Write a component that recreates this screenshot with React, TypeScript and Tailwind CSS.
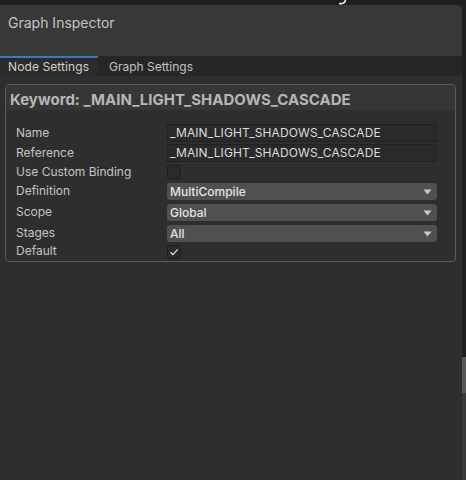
import React from 'react';

const TextField = ({ value }: { value: string }) => (
  <div className="w-[270px] h-[18px] bg-[#2a2a2a] border border-[#212121] rounded-[2px] flex items-center pl-[2px] text-[12px] tracking-[0.1px] text-[#dcdcdc] leading-none">
    {value}
  </div>
);

const Checkbox = ({ checked }: { checked?: boolean }) => (
  <div className="w-[14px] h-[14px] bg-[#2a2a2a] border border-[#1f1f1f] rounded-[2px] flex items-center justify-center">
    {checked && (
      <svg width="10" height="10" viewBox="0 0 10 10">
        <path d="M1.5 5.2 L4 7.6 L8.6 2.4" fill="none" stroke="#e2e2e2" strokeWidth="1.3" />
      </svg>
    )}
  </div>
);

const Dropdown = ({ value }: { value: string }) => (
  <div className="w-[270px] h-[17px] bg-[#505050] rounded-[3px] flex items-center justify-between pl-[3px] pr-[5px] text-[12px] font-medium text-[#e4e4e4] leading-none">
    <span>{value}</span>
    <svg width="9" height="6" viewBox="0 0 9 6">
      <path d="M0.5 0.5 L8.5 0.5 L4.5 5.5 Z" fill="#c9c9c9" />
    </svg>
  </div>
);

const Row = ({ label, h, children }: { label: string; h: string; children: React.ReactNode }) => (
  <div className={`flex items-center ${h}`}>
    <div className="w-[151px] text-[12px] text-[#c4c4c4] leading-none -mt-[1px]">{label}</div>
    {children}
  </div>
);

export default function App() {
  return (
    <div className="w-[466px] h-[480px] bg-[#1e1e1e] flex flex-col font-['Inter','Noto_Sans',sans-serif] overflow-hidden">
      <div className="h-[5px] relative shrink-0">
        <svg className="absolute left-[336px] top-0" width="12" height="5" viewBox="0 0 12 5">
          <path d="M9.5 0 C9 2.6 7 4 3 3.6" fill="none" stroke="#e8e8e8" strokeWidth="1.6" />
        </svg>
      </div>
      <div className="flex flex-1 min-h-0">
        <div className="flex-1 flex flex-col bg-[#2e2e2e] rounded-tr-[5px] overflow-hidden">
          <div className="h-[51px] shrink-0 bg-[#383838] pl-2 pt-[8px] text-[14px] text-[#c4c4c4] leading-5">
            Graph Inspector
          </div>
          <div className="h-[20px] shrink-0 bg-[#262626] flex text-[12px] leading-none">
            <div className="w-[98px] bg-[#2b2b2b] border-t-2 border-[#3d78b8] pl-2 flex items-center text-[#d0d0d0] tracking-[0.1px]">
              Node Settings
            </div>
            <div className="pl-[11px] pt-[2px] flex items-center text-[#c4c4c4]">Graph Settings</div>
          </div>
          <div className="pt-[8px] pl-[5px]">
            <div className="w-[451px] border border-[#5a5a5a] rounded-[4px] overflow-hidden">
              <div className="h-[25px] bg-[#363636] flex items-center pl-[4px] pt-[3px] text-[15px] font-bold text-[#b6b6b6] leading-none">
                Keyword: _MAIN_LIGHT_SHADOWS_CASCADE
              </div>
              <div className="pt-[13px] pl-[10px] pb-[2px]">
                <Row label="Name" h="h-[20px]">
                  <TextField value="_MAIN_LIGHT_SHADOWS_CASCADE" />
                </Row>
                <Row label="Reference" h="h-[20px]">
                  <TextField value="_MAIN_LIGHT_SHADOWS_CASCADE" />
                </Row>
                <Row label="Use Custom Binding" h="h-[18px]">
                  <Checkbox />
                </Row>
                <Row label="Definition" h="h-[21px]">
                  <Dropdown value="MultiCompile" />
                </Row>
                <Row label="Scope" h="h-[21px]">
                  <Dropdown value="Global" />
                </Row>
                <Row label="Stages" h="h-[21px]">
                  <Dropdown value="All" />
                </Row>
                <Row label="Default" h="h-[15px]">
                  <Checkbox checked />
                </Row>
              </div>
            </div>
          </div>
        </div>
        <div className="w-[4px] flex flex-col">
          <div className="h-[352px] bg-[#1f1f1f]" />
          <div className="h-[36px] bg-[#585858]" />
          <div className="flex-1 bg-[#3a3a3a]" />
        </div>
      </div>
    </div>
  );
}
